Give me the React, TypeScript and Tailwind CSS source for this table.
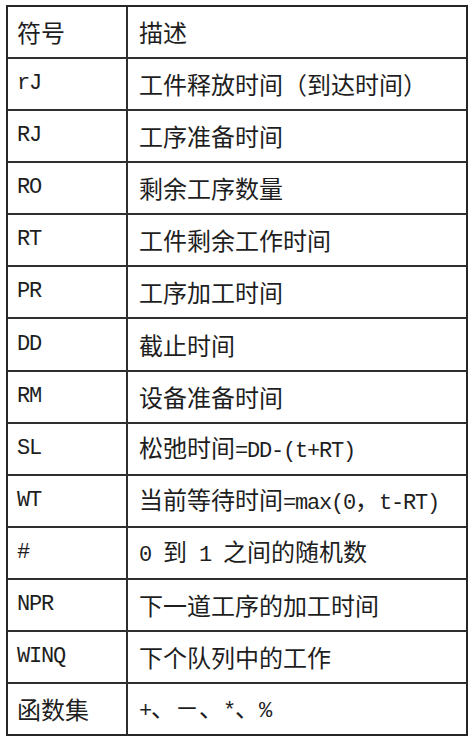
import React from "react";

const rows: [string, string][] = [
  ["符号", "描述"],
  ["rJ", "工件释放时间（到达时间）"],
  ["RJ", "工序准备时间"],
  ["RO", "剩余工序数量"],
  ["RT", "工件剩余工作时间"],
  ["PR", "工序加工时间"],
  ["DD", "截止时间"],
  ["RM", "设备准备时间"],
  ["SL", "松弛时间=DD-(t+RT)"],
  ["WT", "当前等待时间=max(0，t-RT)"],
  ["#", "0 到 1 之间的随机数"],
  ["NPR", "下一道工序的加工时间"],
  ["WINQ", "下个队列中的工作"],
  ["函数集", "+、－、*、%"],
];

function Mixed({ text }: { text: string }) {
  const parts = text.match(/[\u0000-\u00ff]+|[^\u0000-\u00ff]+/g) || [];
  return (
    <span className="whitespace-pre">
      {parts.map((p, i) =>
        /^[\u0000-\u00ff]+$/.test(p) ? (
          <span
            key={i}
            className="text-[22px] tracking-[-1.2px]"
            style={{ fontFamily: '"Liberation Mono", "DejaVu Sans Mono", monospace' }}
          >
            {p}
          </span>
        ) : (
          <span
            key={i}
            className="text-[24px]"
            style={{ fontFamily: '"Noto Sans CJK SC", "Noto Sans", sans-serif' }}
          >
            {p}
          </span>
        )
      )}
    </span>
  );
}

export default function App() {
  return (
    <div className="w-[474px] h-[741px] bg-white pt-[5px] pl-[6px]">
      <div className="w-[462px] h-[731px] border-2 border-[#262626] flex flex-col text-[#1e1e1e]">
        {rows.map(([a, b], i) => (
          <div
            key={i}
            className={`flex-1 flex ${i < rows.length - 1 ? "border-b-2 border-[#2e2e2e]" : ""}`}
          >
            <div className="w-[120px] shrink-0 border-r-2 border-[#2e2e2e] flex items-center pl-[9px] leading-none">
              <Mixed text={a} />
            </div>
            <div className="flex-1 flex items-center pl-[11px] leading-none">
              <Mixed text={b} />
            </div>
          </div>
        ))}
      </div>
    </div>
  );
}
